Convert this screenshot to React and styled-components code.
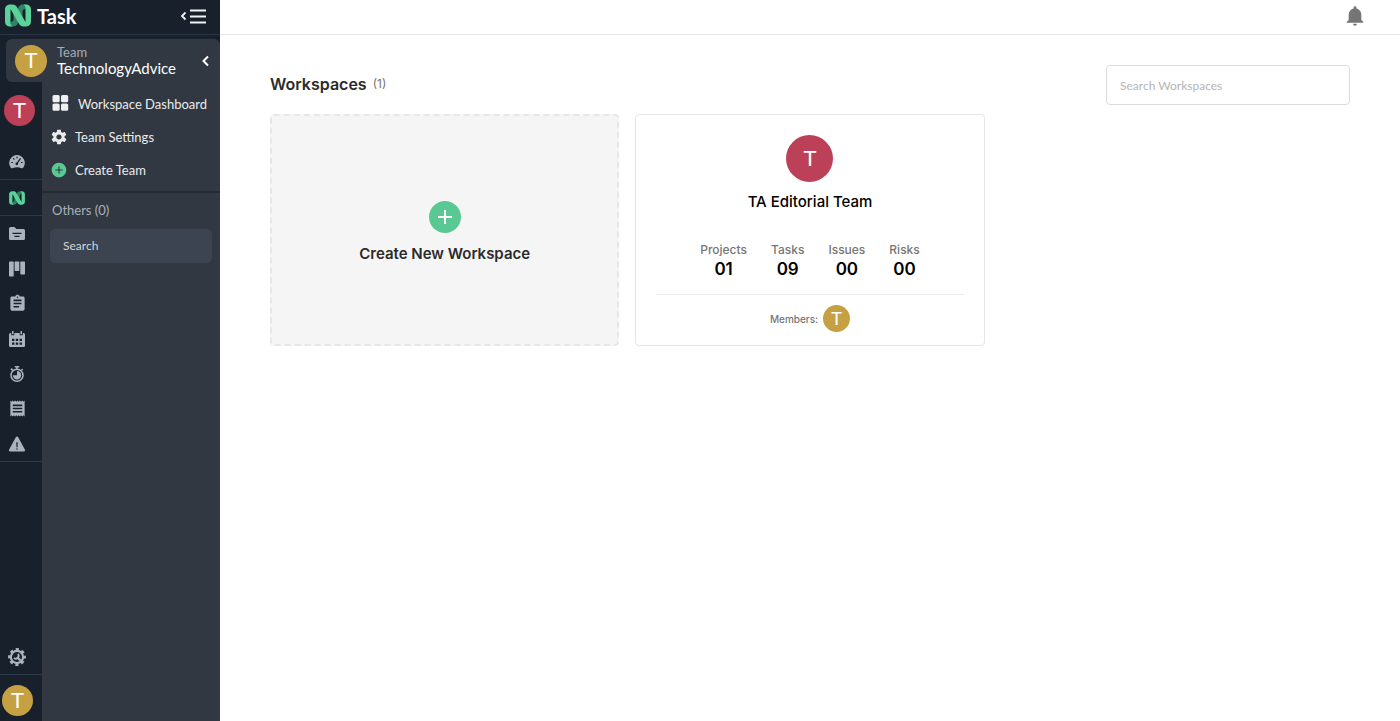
import React from 'react'
import styled, { createGlobalStyle, css } from 'styled-components'
import { MdAssignment, MdReceipt } from 'react-icons/md'
import { IoMdNotifications, IoMdSettings, IoIosAddCircle, IoIosWarning } from 'react-icons/io'



// Icons
const LogoMark = ({ width, height }) => {
  return(
    <svg width={width} height={height} viewBox="0 0 26 23" aria-hidden="true">
      <path d="M5.500 22.500H7.500C11 22.500 13 20.500 13 17.500V14L8.500 9V15C8.500 17 7.500 18 5.500 18Z" fill="#2f8465" />
      <path d="M20.500 0.500H18.500C15 0.500 13 2.500 13 5.500V9L17.500 14V8C17.500 6 18.500 5 20.500 5Z" fill="#2f8465" />
      <path d="M5.500 22.500C2 22.500 0 20.500 0 17.500V5.500C0 2 2.500 0.500 5.500 0.500H7.500C9.500 0.500 11 1.500 12 3.200L20.500 18V5.500C20.500 3 20 1.500 18.500 0.500H20.500C24 0.500 26 2.500 26 5.500V17.500C26 21 23.500 22.500 20.500 22.500H18.500C16.500 22.500 15 21.500 14 19.800L5.500 5V17.500C5.500 20 6 21.500 7.500 22.500Z" fill="#5bd29a" />
    </svg>
  )
}

const MenuIcon = () => {
  return(
    <svg width="26" height="16" viewBox="0 0 26 16" stroke="#f1f3f5" fill="none" aria-hidden="true">
      <path d="M5.500 4.500L2 8L5.500 11.500" strokeWidth="1.800" />
      <path d="M10 2.500H26M10 8.500H26M10 14.500H26" strokeWidth="1.800" />
    </svg>
  )
}

const ChevronIcon = () => {
  return(
    <svg width="9" height="12" viewBox="0 0 9 12" fill="none" aria-hidden="true">
      <path d="M7 1.500L2.500 6L7 10.500" stroke="#fff" strokeWidth="2" />
    </svg>
  )
}

const GridIcon = () => {
  return(
    <svg width="21" height="18" viewBox="0 0 21 18" fill="#eef0f1" aria-hidden="true">
      <rect x="2.500" y="0" width="7.200" height="7.200" rx="1.500" />
      <rect x="11" y="0" width="7.200" height="7.200" rx="1.500" />
      <rect x="2.500" y="8.500" width="7.200" height="7.200" rx="1.500" />
      <rect x="11" y="8.500" width="7.200" height="7.200" rx="1.500" />
    </svg>
  )
}

const GaugeIcon = () => {
  return(
    <svg width="16" height="16" viewBox="0 0 16 16" aria-hidden="true">
      <path d="M8 1A8 8 0 0 0 1.500 13.300Q2.300 14.700 3.500 14.200Q8 12.200 12.500 14.200Q13.700 14.700 14.500 13.300A8 8 0 0 0 8 1Z" fill="currentColor" />
      <g stroke="#18202c" strokeLinecap="round" fill="none">
        <path d="M8 9.500L11.200 4.800" strokeWidth="1.300" />
        <path d="M8 3V3.800M4.500 4.600L5 5.100M2.700 8.500H3.500M12.500 8.500H13.300" strokeWidth="1.200" />
      </g>
      <circle cx="7.800" cy="9.800" r="1.400" fill="#18202c" />
    </svg>
  )
}

const FolderIcon = () => {
  return(
    <svg width="16" height="16" viewBox="0 0 16 16" aria-hidden="true">
      <path d="M1.500 1H5.500L7.300 3H14.500Q16 3 16 4.500V12.500Q16 14 14.500 14H1.500Q0 14 0 12.500V2.500Q0 1 1.500 1Z" fill="currentColor" />
      <path d="M3.500 7.300H12.500M5.500 10.300H10.500" stroke="#18202c" strokeWidth="1.300" />
    </svg>
  )
}

const BoardIcon = () => {
  return(
    <svg width="16" height="16" viewBox="0 0 16 16" fill="currentColor" aria-hidden="true">
      <rect x="0" y="0.500" width="4.700" height="15" rx="0.800" />
      <rect x="5.600" y="0.500" width="4.700" height="9.500" rx="0.800" />
      <rect x="11.300" y="0.500" width="4.700" height="13" rx="0.800" />
    </svg>
  )
}

const CalendarIcon = () => {
  return(
    <svg width="16" height="16" viewBox="0 0 16 16" aria-hidden="true">
      <path d="M1.500 2H2.200V4.200H5.300V2H10.700V4.200H13.800V2H14.500Q16 2 16 3.500V6H0V3.500Q0 2 1.500 2Z" fill="currentColor" />
      <path d="M3 0H4.500V3.300H3ZM11.500 0H13V3.300H11.500Z" fill="currentColor" />
      <path d="M0 6H16V14.500Q16 16 14.500 16H1.500Q0 16 0 14.500Z" fill="currentColor" />
      <path d="M3 7.800H5.400V10H3ZM6.800 7.800H9.200V10H6.800ZM10.600 7.800H13V10H10.600ZM3 11.500H5.400V13.700H3ZM6.800 11.500H9.200V13.700H6.800ZM10.600 11.500H13V13.700H10.600Z" fill="#18202c" />
    </svg>
  )
}

const StopwatchIcon = () => {
  return(
    <svg width="16" height="16" viewBox="0 0 16 16" fill="none" stroke="currentColor" aria-hidden="true">
      <circle cx="8" cy="9.200" r="6" strokeWidth="1.500" />
      <path d="M8 5A4.200 4.200 0 1 1 3.800 9.200H8Z" fill="currentColor" stroke="none" />
      <path d="M5.800 0.800H10.200M8 0.800V3.400M2 2.600L4 4.600M13.600 3L12.500 4.200" strokeWidth="1.500" />
    </svg>
  )
}

const MaintenanceIcon = () => {
  return(
    <svg width="18" height="18" viewBox="0 0 18 18" fill="none" stroke="currentColor" aria-hidden="true">
      <circle cx="9" cy="9" r="6.100" strokeWidth="2.100" />
      <circle cx="9" cy="9" r="7.700" strokeWidth="2.400" strokeDasharray="3.200 2.848" strokeDashoffset="1.600" />
      <path d="M9 9L12.800 12.800" strokeWidth="2.300" />
      <path d="M9.800 6A2.300 2.300 0 1 1 6 9.800" strokeWidth="1.800" />
    </svg>
  )
}

const PlusIcon = () => {
  return(
    <svg width="14" height="14" viewBox="0 0 14 14" aria-hidden="true">
      <path d="M7 0V14M0 7H14" stroke="#fff" strokeWidth="2" />
    </svg>
  )
}
// End of Icons





// Style Components
const GlobalStyle = createGlobalStyle`
  * {
    box-sizing: border-box;
  }

  body {
    margin: 0;
    background: #fff;
    font-family: Lato, sans-serif;
  }

  button, input {
    font: inherit;
    color: inherit;
  }

  button {
    padding: 0;
    border: 0;
    background: none;
    cursor: pointer;
  }

  svg {
    display: block;
    flex: none;
  }
`

const Page = styled.div`
  display: flex;
  min-height: 100vh;
`

const Sidebar = styled.aside`
  display: flex;
  flex-direction: column;
  flex: none;
  width: 220px;
  background: #18202c;
`

const Brand = styled.header`
  display: flex;
  align-items: center;
  justify-content: space-between;
  height: 35px;
  padding: 0 14px 3px 5px;
  border-bottom: 1px solid #273544;
`

const BrandName = styled.a`
  display: flex;
  align-items: center;
  gap: 6px;
  color: #fff;
  font-size: 20px;
  font-weight: 700;
  line-height: 24px;
  text-decoration: none;
`

const Avatar = styled.span`
  display: flex;
  align-items: center;
  justify-content: center;
  flex: none;
  width: ${({ $size }) => $size}px;
  height: ${({ $size }) => $size}px;
  padding-bottom: 2px;
  border-radius: 50%;
  background: ${({ $red }) => $red ? '#bd4059' : '#c6a144'};
  color: #fff;
  font-family: Lato, sans-serif;
  font-size: ${({ $font }) => $font || 22}px;
  line-height: 1;
`

const TeamButton = styled.button`
  display: flex;
  align-items: center;
  gap: 10px;
  height: 43px;
  margin: 4px 0 0 6px;
  padding: 0 10px 0 9px;
  border-radius: 6px 6px 0 6px;
  background: #313841;
  color: #fff;
  text-align: left;
`

const TeamText = styled.span`
  display: flex;
  flex-direction: column;
  flex: 1;
  font-size: 15px;
  line-height: 17px;
`

const TeamLabel = styled.span`
  color: #a3adb9;
  font-size: 13px;
  line-height: 15px;
`

const SidebarBody = styled.div`
  display: flex;
  flex: 1;
`

const Rail = styled.nav`
  display: flex;
  flex-direction: column;
  width: 42px;
  padding: 13px 0 5px;
  color: #a9b4be;
`

const RailTeam = styled.button`
  margin: 0 0 18px 4px;
  align-self: flex-start;
`

const RailItem = styled.button`
  display: flex;
  align-items: center;
  justify-content: center;
  height: 35px;
  padding-right: 8px;

  ${({ $ruled }) => $ruled && css`
    height: 36px;
    border-bottom: 1px solid #2c3a48;
  `}
`

const RailFooter = styled.div`
  display: flex;
  flex-direction: column;
  gap: 10px;
  margin-top: auto;
`

const RailUser = styled.button`
  align-self: flex-start;
  padding-left: 2px;
`

const Panel = styled.div`
  flex: 1;
  background: #313841;
`

const PanelMenu = styled.nav`
  display: flex;
  flex-direction: column;
  padding: 5px 0;
  border-bottom: 2px solid #222a34;
`

const PanelLink = styled.a`
  display: flex;
  align-items: center;
  gap: 7px;
  height: 33px;
  padding-left: 8px;
  color: #e9ebed;
  font-size: 13px;
  text-decoration: none;
`

const Others = styled.section`
  padding: 8px;
`

const OthersLabel = styled.label`
  display: block;
  padding: 0 2px 10px;
  color: #a9b0b8;
  font-size: 13px;
  line-height: 18px;
`

const PanelSearch = styled.input`
  width: 100%;
  height: 34px;
  padding: 0 13px 2px;
  border: 0;
  border-radius: 5px;
  background: #3b4450;
  color: #fff;
  font-size: 12px;

  &::placeholder {
    color: #d3d6da;
    opacity: 1;
  }
`

const Main = styled.main`
  flex: 1;
  min-width: 0;
  font-family: Inter, sans-serif;
`

const TopBar = styled.header`
  display: flex;
  align-items: center;
  justify-content: flex-end;
  height: 35px;
  padding: 0 33px 3px;
  border-bottom: 1px solid #e6e6e6;
  color: #757575;
`

const Content = styled.section`
  padding: 30px 50px;
`

const Heading = styled.div`
  display: flex;
  align-items: center;
  justify-content: space-between;
  margin-bottom: 9px;
`

const Title = styled.h1`
  display: flex;
  align-items: center;
  gap: 6px;
  margin: 0;
  padding-bottom: 2px;
  color: #2b2b2b;
  font-size: 16px;
  font-weight: 600;
`

const Count = styled.span`
  padding-bottom: 2px;
  color: #757575;
  font-size: 12px;
  font-weight: 400;
`

const WorkspaceSearch = styled.input`
  width: 244px;
  height: 40px;
  padding: 0 13px;
  border: 1px solid #dcdcdc;
  border-radius: 4px;
  font-family: Lato, sans-serif;
  font-size: 12px;

  &::placeholder {
    color: #b5b5b5;
    opacity: 1;
  }
`

const Cards = styled.div`
  display: grid;
  grid-template-columns: repeat(3, 1fr);
  gap: 16px;
`

const CreateCard = styled.button`
  display: flex;
  flex-direction: column;
  align-items: center;
  justify-content: center;
  gap: 11px;
  min-height: 232px;
  padding-top: 4px;
  border: 2px dashed #e7e7e7;
  border-radius: 4px;
  background: #f5f5f5;
  color: #2b2b2b;
  font-size: 15px;
  font-weight: 600;
  line-height: 20px;
`

const PlusCircle = styled.span`
  display: flex;
  align-items: center;
  justify-content: center;
  width: 32px;
  height: 32px;
  border-radius: 50%;
  background: #5ac893;
`

const Card = styled.article`
  display: flex;
  flex-direction: column;
  align-items: center;
  padding: 20px 20px 12px;
  border: 1px solid #e6e6e6;
  border-radius: 4px;
`

const CardTitle = styled.h2`
  margin: 10px 0 29px;
  color: #000;
  font-size: 15px;
  font-weight: 500;
  line-height: 20px;
`

const Stats = styled.dl`
  display: flex;
  gap: 24px;
  margin: 0 0 15px;
  text-align: center;
`

const StatLabel = styled.dt`
  color: #757575;
  font-size: 12px;
  font-weight: 500;
  line-height: 18px;
`

const StatValue = styled.dd`
  margin: 0;
  color: #000;
  font-size: 17px;
  font-weight: 600;
  line-height: 20px;
`

const Members = styled.div`
  display: flex;
  align-items: center;
  justify-content: center;
  align-self: stretch;
  gap: 5px;
  padding-top: 10px;
  border-top: 1px solid #ececec;
  color: #757575;
  font-size: 10px;
  font-weight: 500;
`
// End of styled components



const railItems = [
  { name: 'Dashboard', icon: <GaugeIcon />, ruled: true },
  { name: 'Workspaces', icon: <LogoMark width={16} height={14} />, ruled: true },
  { name: 'Projects', icon: <FolderIcon /> },
  { name: 'Boards', icon: <BoardIcon /> },
  { name: 'Tasks', icon: <MdAssignment size={19} /> },
  { name: 'Calendar', icon: <CalendarIcon /> },
  { name: 'Timesheets', icon: <StopwatchIcon /> },
  { name: 'Issues', icon: <MdReceipt size={19} /> },
  { name: 'Risks', icon: <IoIosWarning size={20} />, ruled: true },
]

const panelLinks = [
  { text: 'Workspace Dashboard', icon: <GridIcon /> },
  { text: 'Team Settings', icon: <IoMdSettings size={18} /> },
  { text: 'Create Team', icon: <IoIosAddCircle size={18} color="#5ac893" /> },
]

const stats = [
  { label: 'Projects', value: '01' },
  { label: 'Tasks', value: '09' },
  { label: 'Issues', value: '00' },
  { label: 'Risks', value: '00' },
]

const SideNavigation = () => {
  return(
    <Sidebar>
      <Brand>
        <BrandName href="#"><LogoMark width={26} height={23} />Task</BrandName>
        <button aria-label="Collapse menu"><MenuIcon /></button>
      </Brand>
      <TeamButton>
        <Avatar $size={32}>T</Avatar>
        <TeamText>
          <TeamLabel>Team</TeamLabel>
          TechnologyAdvice
        </TeamText>
        <ChevronIcon />
      </TeamButton>
      <SidebarBody>
        <Rail>
          <RailTeam aria-label="TA Editorial Team"><Avatar $size={31} $red>T</Avatar></RailTeam>
          {railItems.map(({ name, icon, ruled }) => (
            <RailItem key={name} aria-label={name} $ruled={ruled}>{icon}</RailItem>
          ))}
          <RailFooter>
            <RailItem aria-label="Settings" $ruled><MaintenanceIcon /></RailItem>
            <RailUser aria-label="Account"><Avatar $size={31}>T</Avatar></RailUser>
          </RailFooter>
        </Rail>
        <Panel>
          <PanelMenu>
            {panelLinks.map(({ text, icon }) => (
              <PanelLink key={text} href="#">{icon}{text}</PanelLink>
            ))}
          </PanelMenu>
          <Others>
            <OthersLabel htmlFor="others">Others (0)</OthersLabel>
            <PanelSearch id="others" placeholder="Search" />
          </Others>
        </Panel>
      </SidebarBody>
    </Sidebar>
  )
}

const WorkspaceCard = ({ name }) => {
  return(
    <Card>
      <Avatar $size={47} $red>T</Avatar>
      <CardTitle>{ name }</CardTitle>
      <Stats>
        {stats.map(({ label, value }) => (
          <div key={label}>
            <StatLabel>{label}</StatLabel>
            <StatValue>{value}</StatValue>
          </div>
        ))}
      </Stats>
      <Members>
        Members:
        <Avatar $size={27} $font={18}>T</Avatar>
      </Members>
    </Card>
  )
}

const App = () => {
  return(
    <Page>
      <GlobalStyle />
      <SideNavigation />
      <Main>
        <TopBar>
          <button aria-label="Notifications"><IoMdNotifications size={24} /></button>
        </TopBar>
        <Content>
          <Heading>
            <Title>Workspaces <Count>(1)</Count></Title>
            <WorkspaceSearch type="search" aria-label="Search Workspaces" placeholder="Search Workspaces" />
          </Heading>
          <Cards>
            <CreateCard>
              <PlusCircle><PlusIcon /></PlusCircle>
              Create New Workspace
            </CreateCard>
            <WorkspaceCard name="TA Editorial Team" />
          </Cards>
        </Content>
      </Main>
    </Page>
  )
}
export default App;
